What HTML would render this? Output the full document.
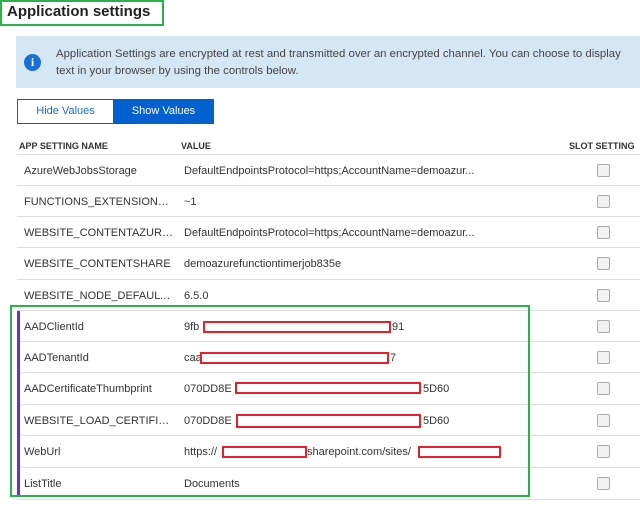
<!DOCTYPE html>
<html><head><style>
body{margin:0;width:640px;height:505px;background:#fff;font-family:"Liberation Sans",sans-serif;position:relative;overflow:hidden;color:#333}
.a{position:absolute}
.t{font-size:11px;white-space:nowrap}
.n{overflow:hidden;width:150px;text-overflow:ellipsis}
.row{position:absolute;left:17px;width:623px;height:31px;border-top:1px solid #ddd}
.cb{position:absolute;left:580px;top:9px;width:11px;height:11px;border:1px solid #aaa;border-radius:2px;background:#f2f2f2}
.red{position:absolute;border:2px solid #e8202a;height:8px;box-sizing:content-box}
</style></head><body>
<div class="a" style="left:0;top:0;width:160px;height:22px;border:2px solid #2cb24a"></div>
<div class="a" style="left:7px;top:3px;font-size:15px;font-weight:bold;color:#222">Application settings</div>
<div class="a" style="left:16px;top:36px;width:624px;height:52px;background:#d5e6f5"></div>
<div class="a" style="left:24px;top:54px;width:17px;height:17px;border-radius:50%;background:#1a6fd6;color:#fff;font-size:12px;font-weight:bold;text-align:center;line-height:17px;font-family:'Liberation Serif',serif">i</div>
<div class="a t" style="left:56px;top:46px;color:#444;line-height:17px;font-size:11.4px">Application Settings are encrypted at rest and transmitted over an encrypted channel. You can choose to display<br>text in your browser by using the controls below.</div>
<div class="a" style="left:17px;top:99px;width:95px;height:23px;border:1px solid #0060d0;background:#fff;color:#1a6fd6;font-size:11px;text-align:center;line-height:23px">Hide Values</div>
<div class="a" style="left:113px;top:99px;width:101px;height:25px;background:#0060d0;color:#fff;font-size:11px;text-align:center;line-height:25px">Show Values</div>
<div class="a" style="left:19px;top:141px;font-size:9px;font-weight:bold;color:#333;white-space:nowrap">APP SETTING NAME</div>
<div class="a" style="left:181px;top:141px;font-size:9px;font-weight:bold;color:#333">VALUE</div>
<div class="a" style="left:569px;top:141px;font-size:9px;font-weight:bold;color:#333;white-space:nowrap">SLOT SETTING</div>
<div class="row" style="top:154px"><span class="a t n" style="left:7px;top:10px">AzureWebJobsStorage</span><span class="a t" style="left:167px;top:10px">DefaultEndpointsProtocol=https;AccountName=demoazur...</span><div class="cb"></div></div>
<div class="row" style="top:185px"><span class="a t n" style="left:7px;top:10px">FUNCTIONS_EXTENSION_VERSION</span><span class="a t" style="left:167px;top:10px">~1</span><div class="cb"></div></div>
<div class="row" style="top:216px"><span class="a t n" style="left:7px;top:10px">WEBSITE_CONTENTAZUREFILE</span><span class="a t" style="left:167px;top:10px">DefaultEndpointsProtocol=https;AccountName=demoazur...</span><div class="cb"></div></div>
<div class="row" style="top:247px"><span class="a t n" style="left:7px;top:10px">WEBSITE_CONTENTSHARE</span><span class="a t" style="left:167px;top:10px">demoazurefunctiontimerjob835e</span><div class="cb"></div></div>
<div class="row" style="top:279px"><span class="a t n" style="left:7px;top:10px">WEBSITE_NODE_DEFAULT_VERSION</span><span class="a t" style="left:167px;top:10px">6.5.0</span><div class="cb"></div></div>
<div class="row" style="top:310px"><span class="a t n" style="left:7px;top:10px">AADClientId</span><span class="a t" style="left:167px;top:10px">9fb</span><span class="a t" style="left:375px;top:10px">91</span><div class="cb"></div></div>
<div class="row" style="top:341px"><span class="a t n" style="left:7px;top:10px">AADTenantId</span><span class="a t" style="left:167px;top:10px">caa</span><span class="a t" style="left:373px;top:10px">7</span><div class="cb"></div></div>
<div class="row" style="top:372px"><span class="a t n" style="left:7px;top:10px">AADCertificateThumbprint</span><span class="a t" style="left:167px;top:10px">070DD8E</span><span class="a t" style="left:406px;top:10px">5D60</span><div class="cb"></div></div>
<div class="row" style="top:404px"><span class="a t n" style="left:7px;top:10px">WEBSITE_LOAD_CERTIFICATES</span><span class="a t" style="left:167px;top:10px">070DD8E</span><span class="a t" style="left:406px;top:10px">5D60</span><div class="cb"></div></div>
<div class="row" style="top:435px"><span class="a t n" style="left:7px;top:10px">WebUrl</span><span class="a t" style="left:167px;top:10px">https://</span><span class="a t" style="left:290px;top:10px">sharepoint.com/sites/</span><div class="cb"></div></div>
<div class="row" style="top:467px;border-bottom:1px solid #ddd"><span class="a t n" style="left:7px;top:10px">ListTitle</span><span class="a t" style="left:167px;top:10px">Documents</span><div class="cb"></div></div>
<div class="a" style="left:17px;top:311px;width:3px;height:186px;background:#7030c0"></div>
<div class="a" style="left:10px;top:305px;width:516px;height:188px;border:2px solid #2cb24a"></div>
<div class="red" style="left:203px;top:321px;width:184px"></div>
<div class="red" style="left:200px;top:352px;width:185px"></div>
<div class="red" style="left:235px;top:382px;width:182px"></div>
<div class="red" style="left:236px;top:414px;width:181px;height:10px"></div>
<div class="red" style="left:222px;top:446px;width:81px"></div>
<div class="red" style="left:418px;top:446px;width:79px"></div>
</body></html>
